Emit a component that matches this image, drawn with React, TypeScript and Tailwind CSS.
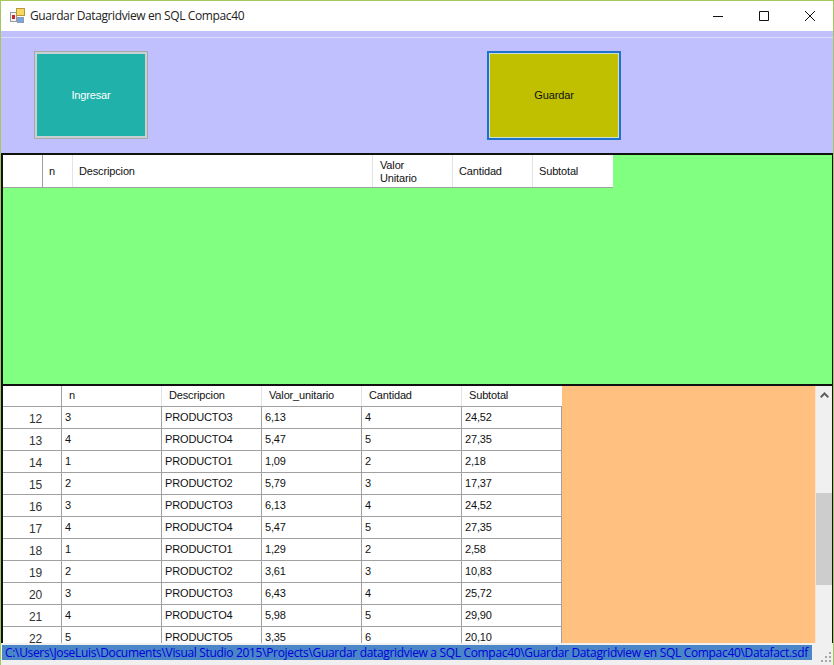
const rows = [
  ["12", "3", "PRODUCTO3", "6,13", "4", "24,52"],
  ["13", "4", "PRODUCTO4", "5,47", "5", "27,35"],
  ["14", "1", "PRODUCTO1", "1,09", "2", "2,18"],
  ["15", "2", "PRODUCTO2", "5,79", "3", "17,37"],
  ["16", "3", "PRODUCTO3", "6,13", "4", "24,52"],
  ["17", "4", "PRODUCTO4", "5,47", "5", "27,35"],
  ["18", "1", "PRODUCTO1", "1,29", "2", "2,58"],
  ["19", "2", "PRODUCTO2", "3,61", "3", "10,83"],
  ["20", "3", "PRODUCTO3", "6,43", "4", "25,72"],
  ["21", "4", "PRODUCTO4", "5,98", "5", "29,90"],
  ["22", "5", "PRODUCTO5", "3,35", "6", "20,10"],
]

const topHeaders = [
  { label: "n", w: "w-[30px]" },
  { label: "Descripcion", w: "w-[300px]" },
  { label: "Valor Unitario", w: "w-[80px]" },
  { label: "Cantidad", w: "w-[80px]" },
  { label: "Subtotal", w: "w-[80px]" },
]

const bottomHeaders = ["n", "Descripcion", "Valor_unitario", "Cantidad", "Subtotal"]

function AppIcon() {
  return (
    <svg width="16" height="16" viewBox="0 0 16 16" className="shrink-0">
      <rect x="0.5" y="4.5" width="6" height="9" fill="#f4f4f4" stroke="#9a9a9a" />
      <rect x="2" y="7" width="3" height="4" fill="#c8262c" />
      <rect x="6.5" y="0.5" width="8" height="7" fill="#f8d860" stroke="#b89a3a" />
      <rect x="7.5" y="9.5" width="6" height="5" fill="#7aa6e0" stroke="#8a9ab8" />
    </svg>
  )
}

function CaptionIcon({ d }: { d: string }) {
  return (
    <svg width="10" height="10" viewBox="0 0 10 10" fill="none" stroke="#111" strokeWidth="1" className="mb-[1px]">
      <path d={d} />
    </svg>
  )
}

export default function App() {
  return (
    <div className="flex h-[665px] w-[834px] flex-col overflow-hidden border-x border-t border-[#a4c85e] bg-white font-['Liberation_Sans',sans-serif] text-[11px] tracking-[-0.15px] text-[#111]">
      {/* title bar */}
      <div className="flex h-[30px] shrink-0 items-center bg-white pl-[9px]">
        <AppIcon />
        <span className="ml-[4px] font-['Open_Sans',sans-serif] text-[12px] tracking-[-0.38px] text-[#222]">Guardar Datagridview en SQL Compac40</span>
        <div className="ml-auto flex items-center">
          <div className="flex w-[46px] justify-center"><CaptionIcon d="M0 5.5H10" /></div>
          <div className="flex w-[46px] justify-center"><CaptionIcon d="M.5 .5H9.5V9.5H.5Z" /></div>
          <div className="flex w-[46px] justify-center"><CaptionIcon d="M0 0L10 10M10 0L0 10" /></div>
        </div>
      </div>

      {/* buttons panel */}
      <div className="h-[6px] shrink-0 bg-[#c0c0ff]" />
      <div className="flex h-[116px] shrink-0 border-t border-[#dcdcf8] bg-[#c0c0ff] pl-[33px] pt-[13px]">
        <div className="flex h-[88px] w-[114px] items-center justify-center border-[3px] border-[#c8d0d4] bg-[#20b2aa] text-white outline outline-1 -outline-offset-1 outline-[#a8a8a8]">
          Ingresar
        </div>
        <div className="ml-[339px] flex h-[89px] w-[134px] items-center justify-center border-2 border-[#1e72c8] bg-[#c0c000] outline outline-1 -outline-offset-3 outline-[#c8e0d8]">
          Guardar
        </div>
      </div>

      {/* top grid */}
      <div className="h-[231px] shrink-0 border-t-2 border-l-2 border-r border-[#111] bg-[#80ff80]">
        <div className="flex h-[33px] w-fit border-b border-[#a0a0a0] bg-white">
          <div className="w-[40px] border-r border-[#a0a0a0]" />
          {topHeaders.map((h) => (
            <div key={h.label} className={`${h.w} flex items-center border-r border-[#e4e4e4] pl-[6px] pt-[1px] leading-[13px] last:border-r-0`}>
              {h.label === "Valor Unitario" ? <span className="w-[40px] pl-[1px]">{h.label}</span> : h.label}
            </div>
          ))}
        </div>
      </div>

      {/* bottom grid */}
      <div className="flex min-h-0 flex-1 border-t-2 border-l-2 border-r border-[#111] bg-[#ffc080]">
        <div className="w-[559px] shrink-0 overflow-hidden bg-white">
          <div className="flex h-[21px] border-b border-[#a0a0a0]">
            <div className="w-[59px] border-r border-[#a0a0a0]" />
            {bottomHeaders.map((h) => (
              <div key={h} className="flex w-[100px] items-center border-r border-[#e4e4e4] pb-[2px] pl-[7px] last:border-r-0">
                {h}
              </div>
            ))}
          </div>
          {rows.map((row, i) => (
            <div key={i} className="flex h-[22px] border-b border-[#a0a0a0]">
              <div className="flex w-[59px] items-end justify-center border-r border-[#a0a0a0] pl-[7px] text-[12px] text-[#333]">{row[0]}</div>
              {row.slice(1).map((cell, j) => (
                <div key={j} className="flex w-[100px] items-center border-r border-[#a0a0a0] pl-[3px]">
                  {cell}
                </div>
              ))}
            </div>
          ))}
        </div>
        <div className="flex-1" />
        <div className="flex w-[17px] shrink-0 flex-col border-l border-[#ffe0c8] bg-[#f0f0f0]">
          <div className="flex h-[17px] items-center justify-center">
            <svg width="9" height="6" viewBox="0 0 9 6" fill="none" stroke="#606060" strokeWidth="2">
              <path d="M.7 5.3L4.5 1.5L8.3 5.3" />
            </svg>
          </div>
          <div className="mt-[90px] h-[92px] bg-[#cdcdcd]" />
        </div>
      </div>

      {/* status bar */}
      <div className="flex h-[22px] shrink-0 items-start bg-[#f0f0f0] pl-[1px] pt-[2px] font-['Open_Sans',sans-serif] text-[12px] tracking-[-0.325px] text-[#0000d8]">
        <span className="flex h-[15px] w-[810px] items-center whitespace-nowrap bg-[#4a86c8] pl-[3px]">
          C:\Users\JoseLuis\Documents\Visual Studio 2015\Projects\Guardar datagridview a SQL Compac40\Guardar Datagridview en SQL Compac40\Datafact.sdf
        </span>
        <svg width="12" height="12" viewBox="0 0 12 12" className="ml-auto mr-[1px] mt-[6px]" fill="#a8a8a8">
          <rect x="9" y="1" width="2" height="2" />
          <rect x="5" y="5" width="2" height="2" />
          <rect x="9" y="5" width="2" height="2" />
          <rect x="1" y="9" width="2" height="2" />
          <rect x="5" y="9" width="2" height="2" />
          <rect x="9" y="9" width="2" height="2" />
        </svg>
      </div>
    </div>
  )
}
